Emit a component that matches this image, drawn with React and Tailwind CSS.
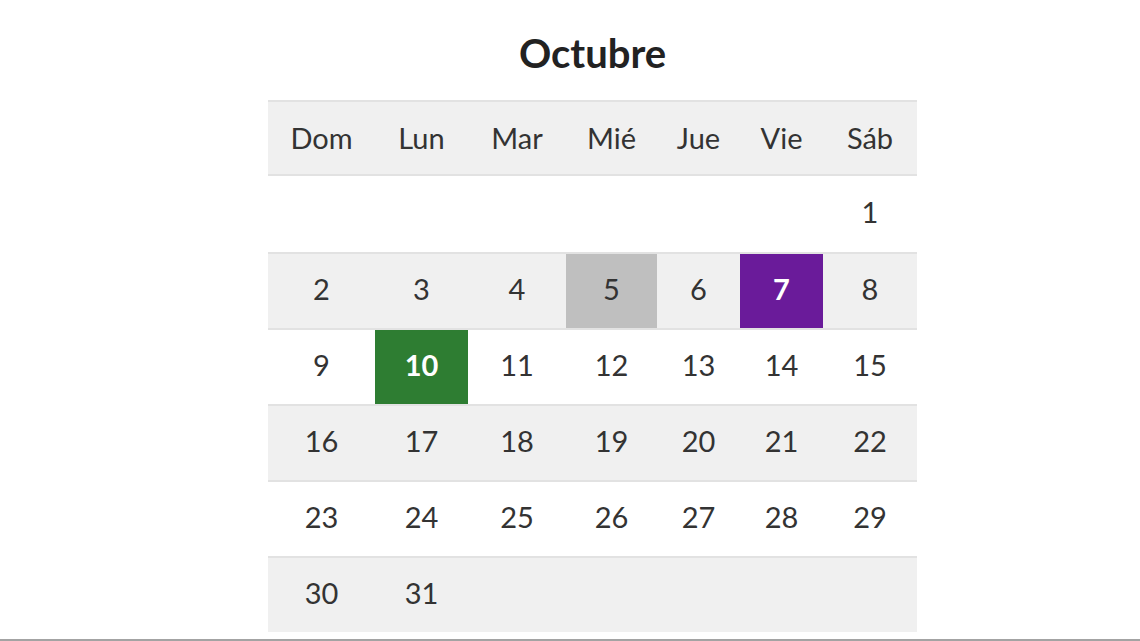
import React from "react";

const heads = ["Dom", "Lun", "Mar", "Mié", "Jue", "Vie", "Sáb"];
const weeks = [
  ["", "", "", "", "", "", "1"],
  ["2", "3", "4", "5", "6", "7", "8"],
  ["9", "10", "11", "12", "13", "14", "15"],
  ["16", "17", "18", "19", "20", "21", "22"],
  ["23", "24", "25", "26", "27", "28", "29"],
  ["30", "31", "", "", "", "", ""],
];

const special = {
  "5": "bg-[#bfbfbf] text-[#333]",
  "7": "bg-[#6a1b9a] text-white font-bold",
  "10": "bg-[#2e7d32] text-white font-bold",
};

const cols = "grid grid-cols-[107px_93px_98px_91px_83px_83px_94px]";

export default function App() {
  return (
    <div className="w-[1140px] h-[641px] bg-white flex flex-col overflow-hidden" style={{ fontFamily: "Lato, 'Noto Sans', sans-serif" }}>
      <div className="flex flex-col items-center pl-[45px]">
        <div className="h-[100px] w-full flex items-center justify-center pt-[6px]">
          <h1 className="text-[40px] font-bold text-[#222] leading-none">Octubre</h1>
        </div>
        <div className="w-[649px] text-[29px] text-[#333]">
          <div className={`${cols} h-[76px] bg-[#f0f0f0] border-t-2 border-b-2 border-[#e2e2e2]`}>
            {heads.map((h) => (
              <div key={h} className="flex items-center justify-center pb-[1px]">{h}</div>
            ))}
          </div>
          {weeks.map((w, i) => (
            <div
              key={i}
              className={`${cols} h-[76px] ${i > 0 ? "border-t-2 border-[#e2e2e2]" : ""} ${i % 2 === 1 ? "bg-[#f0f0f0]" : "bg-white"}`}
            >
              {w.map((d, j) => (
                <div key={j} className={`flex items-center justify-center pb-[4px] ${special[d] || ""}`}>{d}</div>
              ))}
            </div>
          ))}
        </div>
      </div>
      <div className="mt-auto w-full h-[2px] bg-[#a3a3a3]" />
    </div>
  );
}
